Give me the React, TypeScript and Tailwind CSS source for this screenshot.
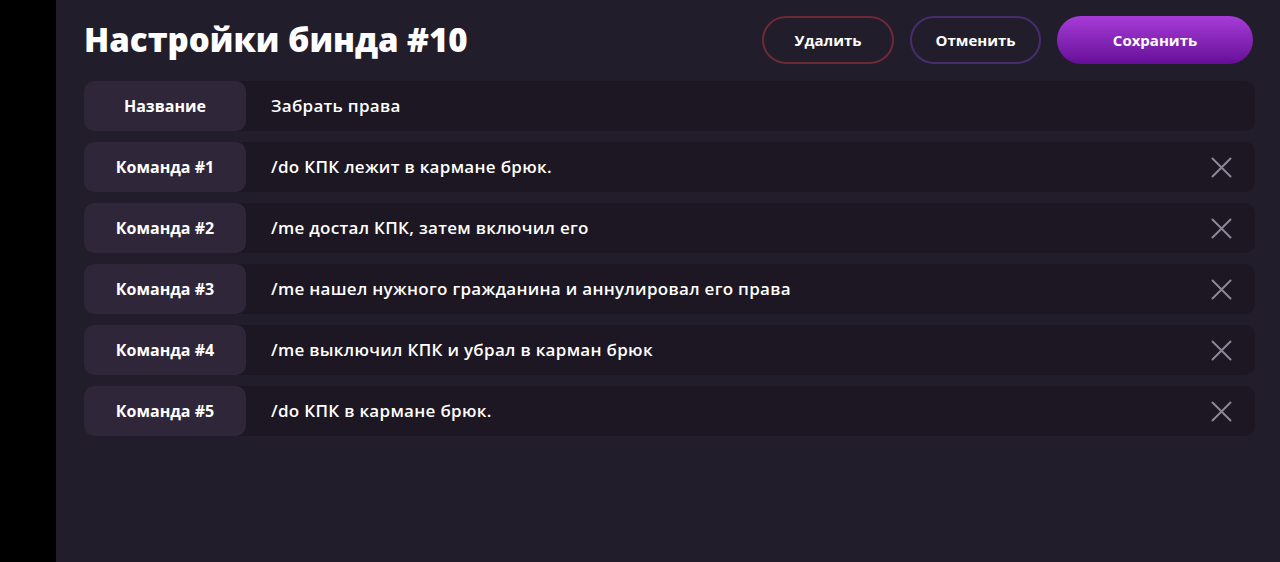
import React from "react";

const rows: [string, string, boolean][] = [
  ["Название", "Забрать права", false],
  ["Команда #1", "/do КПК лежит в кармане брюк.", true],
  ["Команда #2", "/me достал КПК, затем включил его", true],
  ["Команда #3", "/me нашел нужного гражданина и аннулировал его права", true],
  ["Команда #4", "/me выключил КПК и убрал в карман брюк", true],
  ["Команда #5", "/do КПК в кармане брюк.", true],
];

function XIcon() {
  return (
    <svg width="21" height="21" viewBox="0 0 21 21" fill="none">
      <path d="M1.5 1.5 L19.5 19.5 M19.5 1.5 L1.5 19.5" stroke="#8e8599" strokeWidth="2" strokeLinecap="round" />
    </svg>
  );
}

export default function App() {
  return (
    <div
      className="flex h-[562px] w-[1280px] bg-black"
      style={{ fontFamily: "'Open Sans', 'Noto Sans', sans-serif" }}
    >
      <div className="w-[56px] shrink-0 bg-black" />
      <div className="flex-1 bg-[#221d2b] pl-[28px] pr-[25px] pt-[16px]">
        <div className="flex items-center justify-between">
          <h1 className="text-[33px] font-extrabold leading-[48px] text-white">Настройки бинда #10</h1>
          <div className="flex gap-[16px] pr-[2px]">
            <button className="h-[48px] w-[132px] rounded-full border-2 border-[#6b2a36] text-[15px] font-bold text-white">
              Удалить
            </button>
            <button className="h-[48px] w-[131px] rounded-full border-2 border-[#4a2c6c] text-[15px] font-bold text-white">
              Отменить
            </button>
            <button className="h-[48px] w-[196px] rounded-full bg-gradient-to-b from-[#a83bd8] to-[#660d98] text-[15px] font-bold text-white">
              Сохранить
            </button>
          </div>
        </div>
        <div className="mt-[17px] flex flex-col gap-[11px]">
          {rows.map(([label, value, x]) => (
            <div key={label} className="flex h-[50px] items-center rounded-[10px] bg-[#1c1722]">
              <div className="flex h-full w-[162px] items-center justify-center rounded-[10px] bg-[#30263a] text-[16px] font-bold text-white">
                {label}
              </div>
              <div className="flex-1 pl-[25px] text-[17px] font-semibold tracking-[0.3px] text-white">{value}</div>
              {x && (
                <div className="pr-[23px]">
                  <XIcon />
                </div>
              )}
            </div>
          ))}
        </div>
      </div>
    </div>
  );
}
